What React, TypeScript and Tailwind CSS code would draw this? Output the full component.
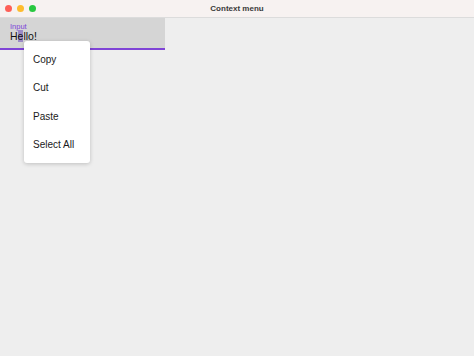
const items = ["Copy", "Cut", "Paste", "Select All"];

const TitleBar = (): JSX.Element => {
  return (
    <div className="relative flex h-[18px] items-center border-b border-[#dcdcdc] bg-[#f7f2f1]">
      <div className="flex items-center gap-[5px] pl-[4.5px]">
        <span className="h-[7px] w-[7px] rounded-full bg-[#fe5f57]" />
        <span className="h-[7px] w-[7px] rounded-full bg-[#febc2e]" />
        <span className="h-[7px] w-[7px] rounded-full bg-[#28c840]" />
      </div>
      <div className="absolute inset-0 flex items-center justify-center text-[8px] font-bold text-[#3a3a3a]">
        Context menu
      </div>
    </div>
  );
};

const App = (): JSX.Element => {
  return (
    <div
      className="relative h-[356px] w-[474px] overflow-hidden bg-[#eeeeee]"
      style={{ fontFamily: '"Liberation Sans", Arial, sans-serif' }}
    >
      <TitleBar />
      <div className="h-[32px] w-[165px] border-b-2 border-[#7f44d6] bg-[#d5d5d5] pl-[10px] pt-[5px]">
        <div className="text-[7.5px] leading-[8px] text-[#7d43d8]">Input</div>
        <div className="text-[10.5px] leading-[11px] text-[#111]">
          H<span className="bg-[#9c8ac6]">e</span>llo!
        </div>
      </div>
      <div className="absolute left-[24px] top-[41px] w-[66px] rounded-[3px] bg-white py-[4px] shadow-[0_1px_4px_rgba(0,0,0,0.2)]">
        {items.map((item) => (
          <div key={item} className="flex h-[28.5px] items-center pl-[9px] text-[10px] text-[#1a1a1a]">
            {item}
          </div>
        ))}
      </div>
    </div>
  );
};

export default App;
